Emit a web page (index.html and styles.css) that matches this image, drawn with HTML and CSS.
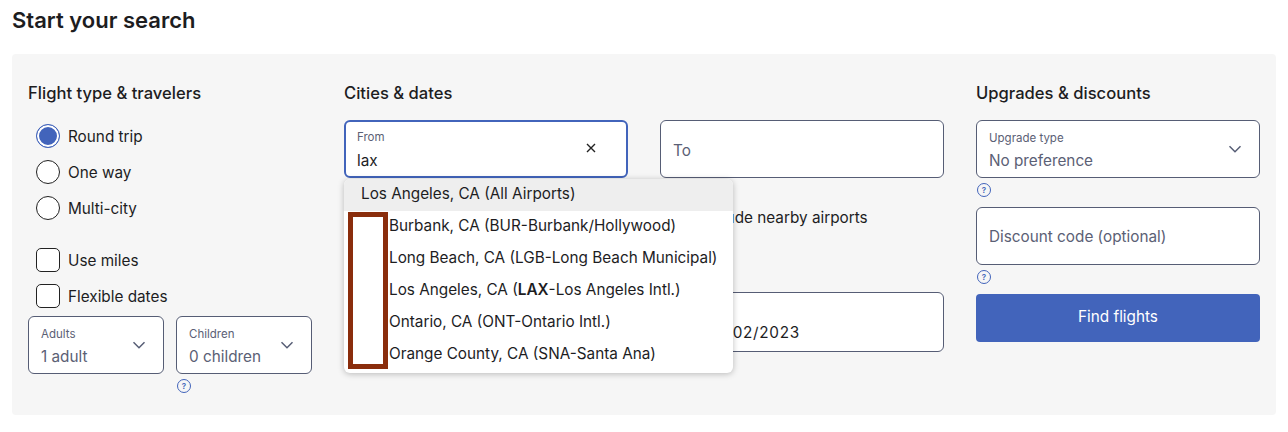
FILE: index.html
```html
<!DOCTYPE html>
<html lang="en">
<head>
    <meta charset="UTF-8">
    <meta name="viewport" content="width=device-width, initial-scale=1.0">
    <title>Start your search</title>
    <link rel="stylesheet" href="styles.css">
</head>
<body>
    <h1 class="page-title">Start your search</h1>
    <form class="panel">
        <section class="column">
            <h2 class="column-title">Flight type &amp; travelers</h2>
            <div class="options trip">
                <label class="option"><span class="radio selected"></span>Round trip</label>
                <label class="option"><span class="radio"></span>One way</label>
                <label class="option"><span class="radio"></span>Multi-city</label>
            </div>
            <div class="options checks">
                <label class="option"><span class="check"></span>Use miles</label>
                <label class="option"><span class="check"></span>Flexible dates</label>
            </div>
            <div class="travelers">
                <div class="traveler">
                    <div class="field select">
                        <span class="field-label">Adults</span>
                        <span class="field-value muted">1 adult</span>
                        <svg class="chevron" viewBox="0 0 14 8"><path d="M1.5 1.2 7 6.7l5.5-5.5"/></svg>
                    </div>
                </div>
                <div class="traveler">
                    <div class="field select">
                        <span class="field-label">Children</span>
                        <span class="field-value muted">0 children</span>
                        <svg class="chevron" viewBox="0 0 14 8"><path d="M1.5 1.2 7 6.7l5.5-5.5"/></svg>
                    </div>
                    <span class="help">?</span>
                </div>
            </div>
        </section>

        <section class="column wide">
            <h2 class="column-title">Cities &amp; dates</h2>
            <div class="cities">
                <div class="from-wrap">
                    <div class="field focused">
                        <span class="field-label">From</span>
                        <span class="field-value">lax</span>
                        <svg class="clear" viewBox="0 0 10 10"><path d="M1 1l8 8M9 1 1 9"/></svg>
                    </div>
                    <ul class="suggestions">
                        <li class="suggestion active">Los Angeles, CA (All Airports)</li>
                        <li class="suggestion">Burbank, CA (BUR-Burbank/Hollywood)</li>
                        <li class="suggestion">Long Beach, CA (LGB-Long Beach Municipal)</li>
                        <li class="suggestion">Los Angeles, CA (<b>LAX</b>-Los Angeles Intl.)</li>
                        <li class="suggestion">Ontario, CA (ONT-Ontario Intl.)</li>
                        <li class="suggestion">Orange County, CA (SNA-Santa Ana)</li>
                    </ul>
                    <div class="redaction"></div>
                </div>
                <div class="to-wrap">
                    <div class="field plain to"><span class="placeholder">To</span></div>
                    <label class="option nearby"><span class="check"></span>Include nearby airports</label>
                    <div class="field date">
                        <span class="field-value">03/02/2023</span>
                    </div>
                </div>
            </div>
        </section>

        <section class="column">
            <h2 class="column-title">Upgrades &amp; discounts</h2>
            <div class="field select">
                <span class="field-label">Upgrade type</span>
                <span class="field-value muted">No preference</span>
                <svg class="chevron" viewBox="0 0 14 8"><path d="M1.5 1.2 7 6.7l5.5-5.5"/></svg>
            </div>
            <span class="help">?</span>
            <div class="field plain discount"><span class="placeholder">Discount code (optional)</span></div>
            <span class="help">?</span>
            <button type="button" class="find">Find flights</button>
        </section>
    </form>
</body>
</html>
```

FILE: styles.css
```css
:root {
    --ink: #1d1d1f;
    --muted: #5b6075;
    --line: #565d75;
    --blue: #4264bb;
}

* {
    box-sizing: border-box;
}

body {
    margin: 0;
    height: 432px;
    overflow: hidden;
    background: white;
    font-family: Inter, 'Noto Sans', sans-serif;
    font-size: 15.3px;
    color: var(--ink);
}

.page-title {
    margin: 0;
    padding: 6px 12px 0;
    height: 54px;
    font-size: 22px;
    line-height: 28px;
    font-weight: 600;
}

.panel {
    display: flex;
    gap: 32px;
    margin: 0 12px;
    padding: 29px 16px 0;
    height: 361px;
    background: #f6f6f6;
    border-radius: 4px;
}

.column {
    width: 284px;
    display: flex;
    flex-direction: column;
    align-items: flex-start;
}

.column.wide {
    width: 600px;
}

.column-title {
    margin: 0 0 17px;
    font-size: 16.6px;
    line-height: 20px;
    font-weight: 500;
}

.options {
    display: flex;
    flex-direction: column;
    gap: 12px;
    padding-left: 8px;
}

.trip {
    margin-top: 4px;
}

.checks {
    margin-top: 28px;
}

.option {
    display: flex;
    align-items: center;
    gap: 8px;
    height: 24px;
    white-space: nowrap;
}

.radio,
.check {
    width: 24px;
    height: 24px;
    background: white;
    border: 1.5px solid #222;
    flex: none;
}

.radio {
    border-radius: 50%;
}

.radio.selected {
    border-color: var(--blue);
    background: var(--blue);
    box-shadow: inset 0 0 0 2px white;
}

.check {
    border-radius: 5px;
}

.travelers {
    display: flex;
    gap: 12px;
    width: 100%;
    margin-top: 8px;
}

.traveler {
    flex: 1;
    display: flex;
    flex-direction: column;
    align-items: flex-start;
}

.field {
    position: relative;
    width: 100%;
    height: 58px;
    padding: 10px 12px 0;
    background: white;
    border: 1px solid var(--line);
    border-radius: 6px;
}

.field.focused {
    border: 2px solid var(--blue);
    padding: 8px 11px 0;
}

.field.plain {
    display: flex;
    align-items: center;
    padding: 0 12px;
}

.field.to {
    padding-top: 2px;
}

.field-label {
    display: block;
    font-size: 11.5px;
    line-height: 14px;
    color: var(--muted);
}

.field-value {
    display: block;
    margin-top: 6px;
    line-height: 20px;
}

.focused .field-value {
    margin-top: 7px;
}

.field-value.muted,
.placeholder {
    color: var(--muted);
}

.chevron {
    position: absolute;
    top: 24px;
    right: 17px;
    width: 14px;
    height: 8px;
    fill: none;
    stroke: var(--line);
    stroke-width: 1.5;
}

.clear {
    position: absolute;
    top: 21px;
    right: 30px;
    width: 10px;
    height: 10px;
    fill: none;
    stroke: #222;
    stroke-width: 1.4;
}

.help {
    display: block;
    width: 14px;
    height: 14px;
    margin: 5px 0 0 1px;
    border: 1px solid var(--blue);
    border-radius: 50%;
    font-size: 8px;
    line-height: 12px;
    font-weight: 600;
    text-align: center;
    color: var(--blue);
}

.column > .field.discount {
    margin-top: 10px;
}

.find {
    width: 100%;
    height: 48px;
    margin-top: 10px;
    padding-bottom: 4px;
    background: var(--blue);
    border: none;
    border-radius: 4px;
    font-family: inherit;
    font-size: 15.3px;
    font-weight: 400;
    color: white;
}

.cities {
    display: grid;
    grid-template-columns: 284px 284px;
    gap: 32px;
    width: 100%;
}

.from-wrap {
    position: relative;
}

.to-wrap {
    display: flex;
    flex-direction: column;
    align-items: flex-start;
}

.nearby {
    margin-top: 27px;
    padding-left: 8px;
}

.field.date {
    height: 60px;
    margin-top: 63px;
    padding: 24px 0 0 45px;
    letter-spacing: 0.7px;
}

.suggestions {
    position: absolute;
    top: 59px;
    left: 0;
    width: 389px;
    margin: 0;
    padding: 0 0 2px;
    list-style: none;
    background: white;
    border-radius: 6px;
    box-shadow: 0 1px 6px rgba(0, 0, 0, 0.25);
    overflow: hidden;
    z-index: 2;
}

.suggestion {
    height: 32px;
    padding-left: 45px;
    line-height: 30px;
    white-space: nowrap;
}

.suggestion b {
    font-weight: 600;
}

.suggestion.active {
    padding-left: 17px;
    background: #eeeeee;
}

.redaction {
    position: absolute;
    top: 92px;
    left: 4px;
    width: 40px;
    height: 157px;
    border: 5px solid #8a2d0c;
    background: white;
    z-index: 3;
}
```
